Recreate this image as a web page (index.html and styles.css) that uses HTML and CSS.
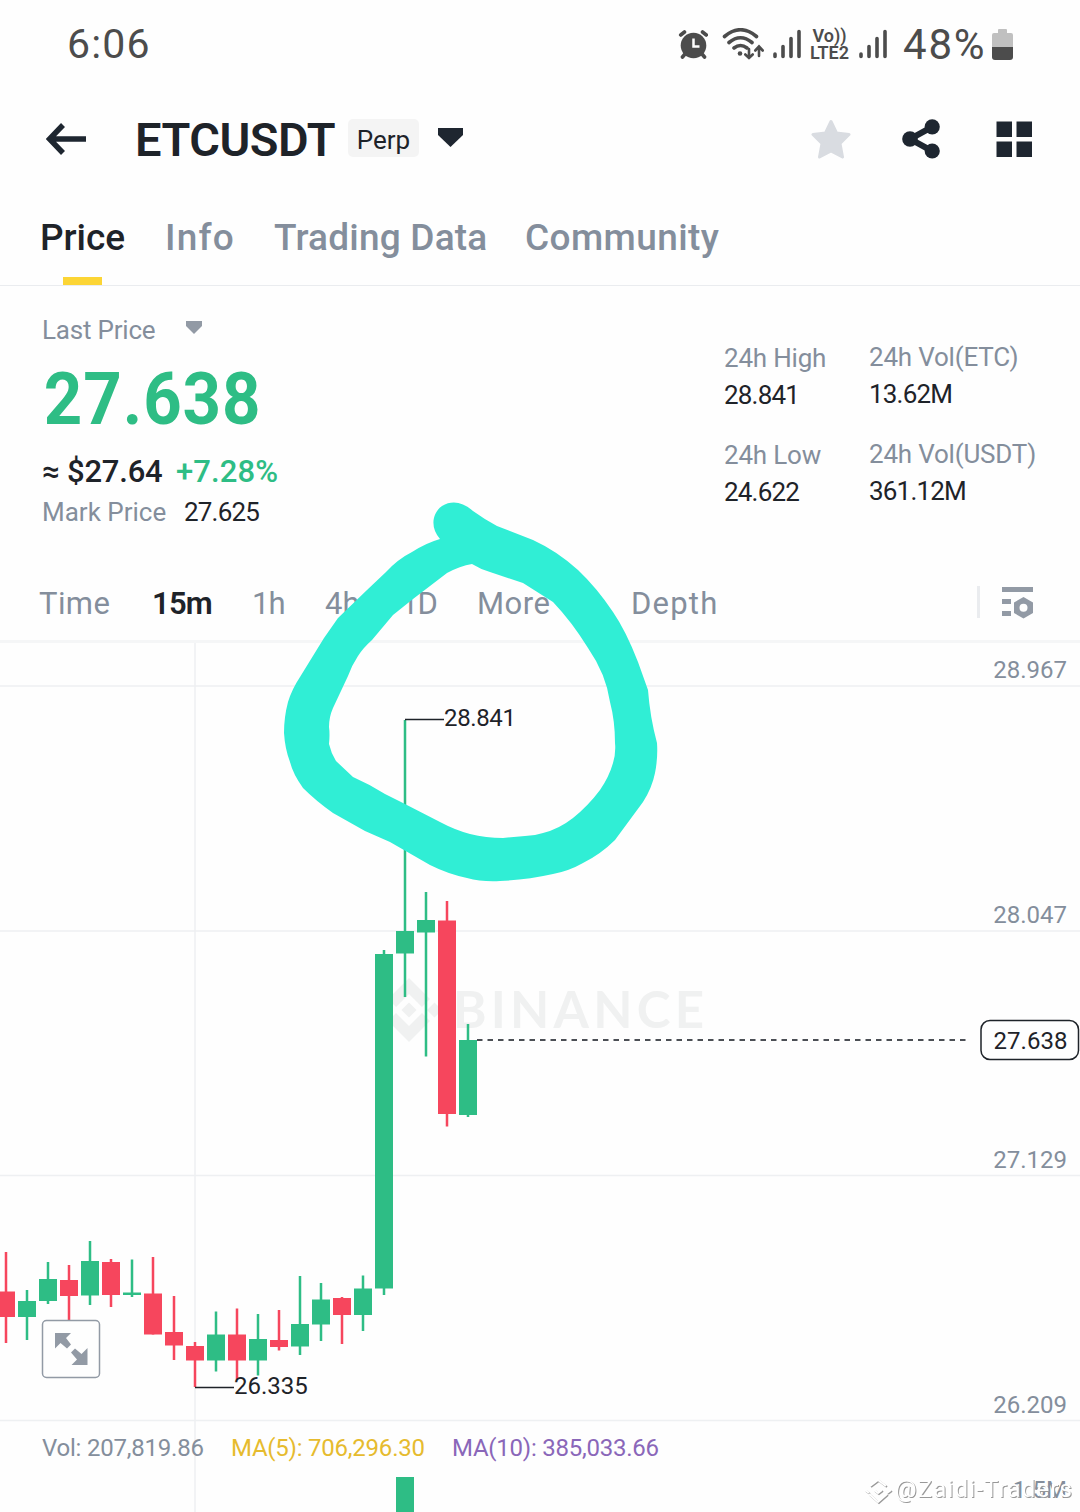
FILE: index.html
```html
<!DOCTYPE html>
<html lang="en">

<head>
    <meta charset="UTF-8">
    <meta name="viewport" content="width=device-width, initial-scale=1.0">
    <title>ETCUSDT Perp</title>
    <link rel="stylesheet" href="styles.css">
</head>

<body>
    <!-- Status bar -->
    <div class="status-bar">
        <span class="clock">6:06</span>
        <div class="status-icons">
            <svg class="alarm" width="30" height="30" viewBox="0 0 30 30">
                <circle cx="15.5" cy="16.5" r="12.8" />
                <path class="line" d="M2.700 6 6.500 3M28.300 6 24.500 3M7 25l-2.500 3M24 25l2.500 3" />
                <path class="hand" d="M15.500 9.500v8h6" />
            </svg>
            <svg class="wifi" width="42" height="32" viewBox="0 0 42 32">
                <path class="line" d="M2.500 8.500Q18.500-5 34.500 8.500M7 14.500Q18.500 5 30 14.500M12 20Q18.500 15 25 20" />
                <circle cx="18" cy="25.500" r="2.300" />
                <path class="arrows" d="M27 21v9M23.300 26.500 27 30l3.700-3.500M37 28V19M33.300 22.500 37 18.500l3.700 4" />
            </svg>
            <svg class="signal" width="28" height="30" viewBox="0 0 28 30">
                <path d="M2 25v2.500M10 17.500v10M18 9.500v18M26 2.500v25" />
            </svg>
            <span class="volte"><span>Vo))</span><span>LTE2</span></span>
            <svg class="signal" width="28" height="30" viewBox="0 0 28 30">
                <path d="M2 25v2.500M10 17.500v10M18 9.500v18M26 2.500v25" />
            </svg>
            <span class="percent">48%</span>
            <svg class="battery" width="21" height="31" viewBox="0 0 21 31">
                <path class="shell" d="M6 1q0-1 1-1h7q1 0 1 1v3h4q2 0 2 2v13H0V6q0-2 2-2h4z" />
                <path d="M0 18h21v10q0 3-3 3H3q-3 0-3-3z" />
            </svg>
        </div>
    </div>

    <!-- Header -->
    <div class="header">
        <svg class="back" width="40" height="32" viewBox="0 0 40 32">
            <path d="M17 2 3.500 16 17 30M4 16h36" />
        </svg>
        <h1>ETCUSDT</h1>
        <span class="badge">Perp</span>
        <svg class="caret" width="25" height="19" viewBox="0 0 25 19">
            <path d="M0 0h25v7L12.500 19 0 7z" />
        </svg>
        <div class="actions">
            <svg class="star" width="40" height="40" viewBox="0 0 40 40">
                <path d="M20 2.500 25.500 14 38 15.500 29 24.500 31.500 38 20 32 8.500 38 11 24.500 2 15.500 14.500 14z" />
            </svg>
            <svg class="share" width="40" height="40" viewBox="0 0 40 40">
                <path d="M30 8 8 20l22 12" />
                <circle cx="30.200" cy="7.800" r="7.600" />
                <circle cx="8" cy="20" r="7.800" />
                <circle cx="30.200" cy="32" r="7.600" />
            </svg>
            <svg class="grid-icon" width="37" height="37" viewBox="0 0 37 37">
                <path d="M0.500 0.500h15.500v15.500H0.500zM20.500 0.500H36v15.500H20.500zM0.500 20.500h15.500V36H0.500zM20.500 20.500H36V36H20.500z" />
            </svg>
        </div>
    </div>

    <!-- Tabs -->
    <div class="tabs">
        <span class="tab active">Price</span>
        <span class="tab info">Info</span>
        <span class="tab trading">Trading Data</span>
        <span class="tab community">Community</span>
    </div>

    <!-- Price summary -->
    <div class="summary">
        <div class="price">
            <div class="last-label"><span>Last Price</span>
                <svg width="16" height="13" viewBox="0 0 16 13">
                    <path d="M0 0h16v5l-8 8-8-8z" />
                </svg>
            </div>
            <div class="last">27.638</div>
            <div class="fiat"><span class="usd">≈ $27.64</span><span class="change">+7.28%</span></div>
            <div class="mark"><span class="mark-label">Mark Price</span><span class="mark-value">27.625</span></div>
        </div>
        <div class="stats">
            <div class="stat high"><label>24h High</label><b>28.841</b></div>
            <div class="stat low"><label>24h Low</label><b>24.622</b></div>
        </div>
        <div class="stats volumes">
            <div class="stat vol-etc"><label>24h Vol(ETC)</label><b>13.62M</b></div>
            <div class="stat vol-usdt"><label>24h Vol(USDT)</label><b>361.12M</b></div>
        </div>
    </div>

    <!-- Intervals -->
    <div class="intervals">
        <span class="time">Time</span>
        <span class="m15">15m</span>
        <span class="h1">1h</span>
        <span class="h4">4h</span>
        <span class="d1">1D</span>
        <span class="more">More</span>
        <span class="depth">Depth</span>
        <i class="divider"></i>
        <svg width="32" height="33" viewBox="0 0 32 33">
            <path fill-rule="evenodd" d="M0 0h31v5H0zM0 12h9v5H0zM0 24h9v5H0zM21.500 10l9.500 5.500v10.500L21.500 31.500 12 26V15.500zM21.500 16.800a4 4 0 1 0 0 8 4 4 0 0 0 0-8z" />
        </svg>
    </div>

    <!-- Chart -->
    <svg class="chart" width="1080" height="869" viewBox="0 643 1080 869">
        <g class="watermark">
            <path d="M409 978 430 999 422 1007 409 994 396 1007 388 999zM388 1021 396 1013 409 1026 422 1013 430 1021 409 1042zM409 1002.500 416.500 1010 409 1017.500 401.500 1010zM427 1010l7.500-7.500 7.500 7.500-7.500 7.500z" />
            <text x="453" y="1028" textLength="251">BINANCE</text>
        </g>
        <path class="grid-line" d="M0 686h1080M0 931h1080M0 1175.500h1080M0 1420.500h1080M195 643v869" />
        <g id="candles"></g>
        <path class="pointer" d="M405 719.500h39M195 1387.500h39" />
        <path class="price-line" d="M477 1040h490" />
        <g class="extreme">
            <text x="444" y="726" textLength="72">28.841</text>
            <text x="234" y="1394">26.335</text>
        </g>
        <g class="axis">
            <text x="1067" y="678">28.967</text>
            <text x="1067" y="923">28.047</text>
            <text x="1067" y="1168">27.129</text>
            <text x="1067" y="1413">26.209</text>
            <text x="1067" y="1498">1.5M</text>
        </g>
        <rect class="tag" x="981" y="1020.500" width="97.500" height="39" rx="9" />
        <text class="tag-text" x="1030.500" y="1049">27.638</text>
        <g class="expand">
            <rect x="42.500" y="1320.500" width="57" height="57" rx="4" />
            <path d="M55 1333h16l-5 5 5 6.500-4 4-6.500-5.500-5.500 5.500zM87.500 1365h-16l5.500-5.500-6-7 4-4 6.500 5.500 6-6z" />
        </g>
        <text class="vol" x="42" y="1456" textLength="162">Vol: 207,819.86</text>
        <text class="ma5" x="231" y="1456" textLength="194">MA(5): 706,296.30</text>
        <text class="ma10" x="452" y="1456" textLength="207">MA(10): 385,033.66</text>
        <rect class="up" x="396" y="1477" width="18" height="35" />
        <g class="author">
            <path d="M870 1486l8-6 8 6M865 1490l4 3M891 1490l-4 3M874 1490l4 3 4-3M869 1494l9 8 9-8" />
            <text x="895" y="1497" textLength="177">@Zaidi-Traders</text>
        </g>
    </svg>

    <!-- Hand-drawn marker over the spike -->
    <svg class="marker" width="1080" height="1512" viewBox="0 0 1080 1512">
        <path fill-rule="evenodd" d="M440 539C430 528 432 513 442 506C452 500 463 502 473 511Q484 519 497 526L533 540Q557 551 578 570Q597 588 613 612Q626 631 638 662L648 690Q650 717 657 743Q658 758 655 773Q652 788 643 802L615 840Q601 854 583 863Q569 871 553 874Q526 880 500 881Q482 882 467 878Q448 874 430 865L390 842L365 831L333 813Q316 801 303 788Q293 774 290 762Q285 749 284 733Q284 717 288 702Q292 689 300 677L324 638L338 618L367 590L386 572Q398 559 412 552Q426 543 440 539zM472 564Q460 566 447 573L413 599L393 615L372 640Q363 648 358 656Q352 665 348 676L333 708Q329 717 329 727Q330 734 329 744Q331 753 336 761L353 777Q369 784 385 794L403 803L440 822Q455 830 470 834Q486 838 503 838L525 836Q534 836 543 833Q559 829 573 818Q588 806 600 790Q609 777 613 763Q616 753 615 743Q615 721 610 702Q606 674 588 648Q572 622 553 602L523 583L490 572Q480 569 472 564z" />
    </svg>

    <script>
        // center x, high, low, body top, body bottom, direction
        const candles = [
            [6, 1252, 1343, 1291.5, 1317, 'down'],
            [27, 1290, 1340, 1301, 1317, 'up'],
            [48, 1262, 1304, 1279, 1301, 'up'],
            [69, 1265, 1320, 1280, 1296, 'down'],
            [90, 1241, 1305, 1261, 1295.5, 'up'],
            [111, 1259, 1307, 1262, 1295, 'down'],
            [132, 1259.5, 1297, 1292.5, 1295, 'up'],
            [153, 1257, 1334.5, 1293.5, 1334.5, 'down'],
            [174, 1296, 1360, 1332, 1345.5, 'down'],
            [195, 1342, 1387, 1346, 1360.5, 'down'],
            [216, 1311.5, 1371.5, 1334.5, 1360.5, 'up'],
            [237, 1308.5, 1379, 1334.5, 1360.5, 'down'],
            [258, 1314, 1375.5, 1339, 1360.5, 'up'],
            [279, 1310, 1350.5, 1340, 1347, 'down'],
            [300, 1276, 1355, 1324, 1346.5, 'up'],
            [321, 1283, 1341, 1299.5, 1324.5, 'up'],
            [342, 1297, 1344, 1298, 1315, 'down'],
            [363, 1275.5, 1331, 1288.5, 1315, 'up'],
            [384, 950, 1295, 954, 1288.5, 'up'],
            [405, 720, 997, 931, 953.5, 'up'],
            [426, 892, 1056.5, 920, 932.5, 'up'],
            [447, 901, 1126.5, 920.5, 1114, 'down'],
            [468, 1024, 1117, 1040, 1115, 'up'],
        ];

        document.getElementById('candles').innerHTML = candles.map(([x, high, low, top, bottom, dir]) => `
            <rect class="${dir}" x="${x - 1.25}" y="${high}" width="2.5" height="${low - high}" />
            <rect class="${dir}" x="${x - 9}" y="${top}" width="18" height="${bottom - top}" />
        `).join('');
    </script>
</body>

</html>
```
FILE: styles.css
```css
* {
    box-sizing: border-box;
}

body {
    position: relative;
    width: 1080px;
    height: 1512px;
    margin: 0;
    overflow: hidden;
    background: #fefefe;
    color: #1e2329;
    font-family: Roboto, sans-serif;
    white-space: nowrap;
}

svg {
    display: block;
    flex: none;
}

/* Status bar */
.status-bar {
    display: flex;
    align-items: center;
    justify-content: space-between;
    height: 88px;
    padding: 0 67px 0 67px;
    color: #4c4c4c;
    fill: #4c4c4c;
}

.clock {
    font-size: 41px;
    letter-spacing: 1.2px;
}

.status-icons {
    display: flex;
    align-items: center;
}

.line,
.arrows,
.signal path {
    fill: none;
    stroke: #4c4c4c;
    stroke-width: 3.6;
    stroke-linecap: round;
}

.hand {
    fill: none;
    stroke: #fefefe;
    stroke-width: 2.5;
}

.wifi {
    margin-left: 14px;
}

.arrows {
    stroke-width: 2.6;
}

.signal {
    width: 28px;
    margin-left: 9px;
}

.volte {
    display: flex;
    flex-direction: column;
    align-items: center;
    width: 41px;
    margin-left: 8px;
    font-size: 18px;
    font-weight: 600;
    line-height: 17px;
}

.percent {
    width: 84px;
    margin: 0 5px 0 16px;
    font-size: 42px;
    letter-spacing: 1.8px;
}

.battery .shell {
    fill: #c0c0c0;
}

/* Header */
.header {
    display: flex;
    align-items: center;
    height: 102px;
    padding: 0 47px 0 46px;
    fill: #1e2630;
}

.back path {
    fill: none;
    stroke: #1e2630;
    stroke-width: 5.5;
}

.header h1 {
    width: 200px;
    margin: 0 0 0 49px;
    font-size: 47px;
    font-weight: 600;
    letter-spacing: -0.5px;
}

.badge {
    width: 71px;
    height: 38px;
    margin: -2px 0 0 13px;
    border-radius: 5px;
    background: #f4f4f4;
    font-size: 26px;
    line-height: 42px;
    text-align: center;
}

.caret {
    margin: -4px 0 0 19px;
}

.actions {
    display: flex;
    align-items: center;
    margin-left: auto;
}

.star {
    fill: #d9dce1;
    stroke: #d9dce1;
    stroke-width: 3;
    stroke-linejoin: round;
}

.share {
    margin: 0 54px 0 51px;
}

.share path {
    fill: none;
    stroke: #1e2630;
    stroke-width: 6;
}

/* Tabs */
.tabs {
    display: flex;
    height: 96px;
    padding-left: 41px;
    border-bottom: 1px solid #eaecef;
    color: #848e9c;
    font-size: 37px;
    font-weight: 500;
    line-height: 95px;
}

.tab.active {
    display: flex;
    flex-direction: column;
    align-items: center;
    width: 83px;
    color: #1e2329;
}

.tab.active::after {
    content: "";
    width: 39px;
    height: 8px;
    margin-top: -8px;
    background: #fcd535;
}

.info {
    width: 70px;
    margin-left: 41px;
    letter-spacing: 1.2px;
}

.trading {
    width: 213px;
    margin-left: 39px;
    letter-spacing: 0.2px;
}

.community {
    margin-left: 38px;
    letter-spacing: 0.4px;
}

/* Price summary */
.summary {
    display: flex;
    height: 279px;
    padding: 28px 0 0 42px;
    color: #848e9c;
    font-size: 26px;
    letter-spacing: -0.2px;
}

.price {
    width: 682px;
}

.last-label {
    display: flex;
    align-items: center;
    height: 32px;
    fill: #929aa5;
}

.last-label span {
    width: 144px;
}

.last-label svg {
    margin-bottom: 5px;
}

/* Narrow bold digits */
.last {
    height: 105px;
    padding-left: 2px;
    color: #2ebd85;
    font-size: 73px;
    font-weight: 700;
    letter-spacing: 1px;
    line-height: 106px;
    transform: scaleX(0.92);
    transform-origin: 0 0;
}

.fiat {
    display: flex;
    height: 40px;
    color: #1e2329;
    font-size: 31px;
    font-weight: 500;
    line-height: 42px;
}

.usd {
    width: 134px;
}

.change {
    color: #2ebd85;
    letter-spacing: 0.1px;
}

.mark {
    display: flex;
    line-height: 42px;
}

.mark-label {
    width: 142px;
    letter-spacing: 0;
}

.mark-value,
.stat b {
    color: #1e2329;
    font-weight: 400;
    letter-spacing: -0.8px;
}

.stats {
    display: flex;
    flex-direction: column;
    gap: 21px;
    width: 145px;
    padding-top: 25px;
}

.volumes {
    padding-top: 24px;
}

.stat {
    display: flex;
    flex-direction: column;
    line-height: 38px;
}

.stat b {
    line-height: 37px;
    margin-bottom: 1px;
}

/* Intervals */
.intervals {
    display: flex;
    align-items: center;
    height: 78px;
    padding: 2px 0 0 39px;
    border-bottom: 3px solid #f5f6f7;
    color: #848e9c;
    fill: #929aa5;
    font-size: 31px;
}

.time {
    width: 113px;
    letter-spacing: 0.4px;
}

.m15 {
    width: 100px;
    color: #1e2329;
    font-weight: 600;
    letter-spacing: -0.8px;
}

.h1 {
    width: 73px;
    letter-spacing: -0.8px;
}

.h4 {
    width: 76px;
}

.d1 {
    width: 76px;
    letter-spacing: -0.8px;
}

.more {
    width: 154px;
    letter-spacing: 0.5px;
}

.depth {
    width: 346px;
    letter-spacing: 1.2px;
}

.divider {
    width: 3px;
    height: 32px;
    margin: -4px 22px 0 0;
    background: #eaecef;
}

/* Chart */
.chart text {
    font-size: 24px;
}

.grid-line {
    fill: none;
    stroke: #eef0f2;
    stroke-width: 1.5;
}

.watermark,
.chart .watermark text {
    fill: #f0f1f1;
    font-family: Lato, sans-serif;
    font-size: 51px;
    font-weight: 700;
}

.up {
    fill: #2ebd85;
}

.down {
    fill: #f6465d;
}

.pointer {
    stroke: #1e2329;
    stroke-width: 1.5;
}

.price-line {
    stroke: #4b4f55;
    stroke-width: 1.8;
    stroke-dasharray: 5.5 5;
}

.extreme,
.tag-text {
    fill: #1e2329;
}

.axis {
    fill: #848e9c;
    text-anchor: end;
}

.tag {
    fill: #fefefe;
    stroke: #1e2329;
    stroke-width: 1.5;
}

.tag-text {
    text-anchor: middle;
}

.expand rect {
    fill: #fefefe;
    stroke: #929aa5;
    stroke-width: 1.5;
}

.expand path {
    fill: #929aa5;
}

.vol {
    fill: #848e9c;
}

.ma5 {
    fill: #e6bb2e;
}

.ma10 {
    fill: #8a67b9;
}

.author {
    fill: #fff;
    filter: drop-shadow(1px 1px 0.5px #999);
}

.author path {
    fill: none;
    stroke: #fff;
    stroke-width: 2;
}

/* Marker lies over the interval bar and the chart */
.marker {
    position: absolute;
    top: 0;
    left: 0;
    fill: #30eed5;
}
```
